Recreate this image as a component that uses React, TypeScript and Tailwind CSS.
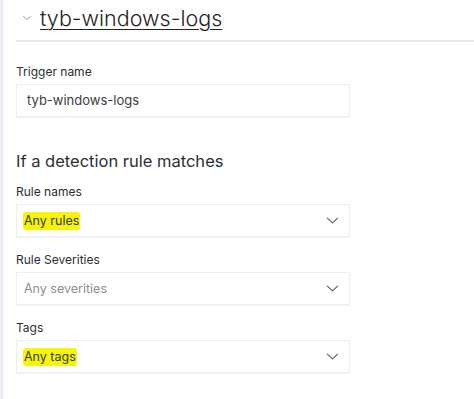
import React from 'react';

const Chevron: React.FC<{ className?: string }> = ({ className }) => (
  <svg viewBox="0 0 16 16" className={className} fill="none" stroke="currentColor" strokeWidth={1.2} strokeLinecap="round" strokeLinejoin="round">
    <path d="M2.5 5.5l5.5 5L13.5 5.5" />
  </svg>
);

const SelectBox: React.FC<{ value: string; highlight?: boolean }> = ({ value, highlight }) => (
  <div className="w-[334px] h-[33px] flex items-center justify-between pl-[6px] pr-[9px] bg-white border border-[#eceef2] shadow-[0_1px_1px_rgba(0,0,0,0.04)]">
    {highlight ? (
      <span className="bg-[#f6f40a] text-[#3a3a24] text-[12.5px] px-[1px] rounded-[3px] leading-[18px]">{value}</span>
    ) : (
      <span className="text-[#8a8f98] text-[12.5px] leading-[18px] pl-[1px]">{value}</span>
    )}
    <Chevron className="w-[15px] h-[15px] text-[#5a5f66]" />
  </div>
);

const Field: React.FC<{ label: string; children: React.ReactNode }> = ({ label, children }) => (
  <div className="flex flex-col">
    <label className="text-[12px] text-[#2b2f33] leading-[16px] mb-[4px]">{label}</label>
    {children}
  </div>
);

export default function App() {
  return (
    <div className="w-[474px] h-[399px] bg-white flex overflow-hidden" style={{ fontFamily: 'Inter, "Noto Sans", sans-serif' }}>
      <div className="w-[3px] bg-[#eef0f7] border-r border-[#e2e4ee]" />
      <div className="flex-1 pl-[13px]">
        <div className="flex items-center h-[42px] border-b-2 border-[#e6e8eb]">
          <Chevron className="w-[10px] h-[10px] text-[#6a6f76] ml-[6px] mr-[8px] mb-[5px]" />
          <h1 className="text-[21.5px] leading-[30px] font-light text-[#1f2326] underline decoration-1 underline-offset-[3px] mb-[5px]">
            tyb-windows-logs
          </h1>
        </div>

        <div className="pt-[22px] flex flex-col">
          <Field label="Trigger name">
            <div className="w-[334px] h-[33px] flex items-center pl-[10px] bg-white border border-[#eceef2] shadow-[0_1px_1px_rgba(0,0,0,0.04)] text-[13px] text-[#3c4044]">
              tyb-windows-logs
            </div>
          </Field>

          <h2 className="mt-[32px] text-[16.5px] leading-[24px] text-[#2b2f33]">If a detection rule matches</h2>

          <div className="mt-[11px] flex flex-col gap-[15px]">
            <Field label="Rule names">
              <SelectBox value="Any rules" highlight />
            </Field>
            <Field label="Rule Severities">
              <SelectBox value="Any severities" />
            </Field>
            <Field label="Tags">
              <SelectBox value="Any tags" highlight />
            </Field>
          </div>
        </div>
      </div>
    </div>
  );
}
